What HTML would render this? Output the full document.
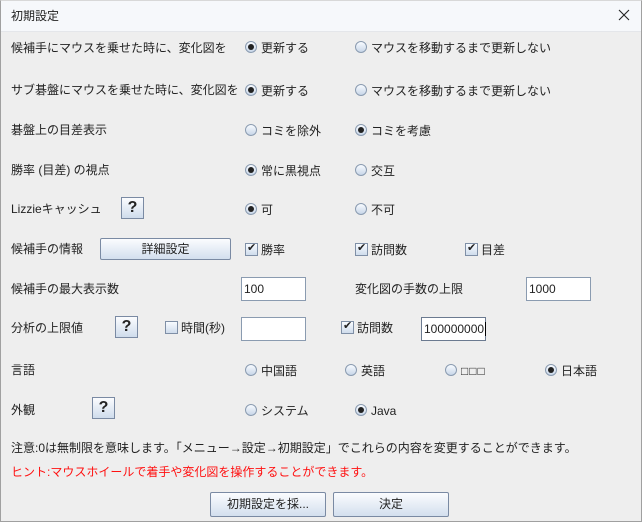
<!DOCTYPE html>
<html><head><meta charset="utf-8"><style>
*{margin:0;padding:0;box-sizing:border-box}
body{width:642px;height:522px;overflow:hidden;background:#eeeeee;font-family:"Liberation Sans","Noto Sans CJK JP",sans-serif;font-size:12px;color:#222;position:relative}
.t{position:absolute;line-height:16px;white-space:nowrap}
.title{position:absolute;left:0;top:0;width:642px;height:32px;background:#f6f8fb;border-bottom:1px solid #e4e6ea}
.r{position:absolute;width:12px;height:12px;border-radius:50%;border:1px solid #8a9bb0;background:linear-gradient(#f8fbff,#c8d6e8)}
.r.on::after{content:"";position:absolute;left:2px;top:2px;width:6px;height:6px;border-radius:50%;background:#222}
.c{position:absolute;width:13px;height:13px;border:1px solid #7f8fa6;background:linear-gradient(#f8fbff,#cfdcec)}
.c.on::after{content:"✔";position:absolute;left:1px;top:-3px;font-size:11px;color:#222}
.b{position:absolute;border:1px solid #7a8aa3;border-radius:2px;background:linear-gradient(#fbfcfe,#d3dfee);text-align:center;line-height:20px}
.q{position:absolute;width:23px;height:22px;border:1px solid #7a8aa3;background:linear-gradient(#fbfcfe,#cfdcec);text-align:center;font-weight:bold;font-size:16px;line-height:20px}
.f{position:absolute;height:24px;border:1px solid #8a9bb0;background:#fff;padding-left:2px;line-height:22px;color:#222}
.edge{position:absolute;left:0;top:0;width:642px;height:522px;border:1px solid #a0a0a0;border-top-color:#d8d8d8;pointer-events:none}
</style></head><body>
<div class="title"></div>
<div class="t" style="left:11px;top:8px">初期設定</div>
<svg style="position:absolute;left:618px;top:9px" width="12" height="12" viewBox="0 0 12 12"><path d="M1 1L11 11M11 1L1 11" stroke="#222" stroke-width="1.1" fill="none"/></svg>

<div class="t" style="left:11px;top:40px">候補手にマウスを乗せた時に、変化図を</div>
<div class="r on" style="left:245px;top:41px"></div><div class="t" style="left:261px;top:40px">更新する</div>
<div class="r" style="left:355px;top:41px"></div><div class="t" style="left:371px;top:40px">マウスを移動するまで更新しない</div>

<div class="t" style="left:11px;top:82px">サブ碁盤にマウスを乗せた時に、変化図を</div>
<div class="r on" style="left:245px;top:84px"></div><div class="t" style="left:261px;top:83px">更新する</div>
<div class="r" style="left:355px;top:84px"></div><div class="t" style="left:371px;top:83px">マウスを移動するまで更新しない</div>

<div class="t" style="left:11px;top:122px">碁盤上の目差表示</div>
<div class="r" style="left:245px;top:124px"></div><div class="t" style="left:261px;top:123px">コミを除外</div>
<div class="r on" style="left:355px;top:124px"></div><div class="t" style="left:371px;top:123px">コミを考慮</div>

<div class="t" style="left:11px;top:162px">勝率 (目差) の視点</div>
<div class="r on" style="left:245px;top:164px"></div><div class="t" style="left:261px;top:163px">常に黒視点</div>
<div class="r" style="left:355px;top:164px"></div><div class="t" style="left:371px;top:163px">交互</div>

<div class="t" style="left:11px;top:201px">Lizzieキャッシュ</div>
<div class="q" style="left:121px;top:197px">?</div>
<div class="r on" style="left:245px;top:203px"></div><div class="t" style="left:261px;top:202px">可</div>
<div class="r" style="left:355px;top:203px"></div><div class="t" style="left:371px;top:202px">不可</div>

<div class="t" style="left:11px;top:241px">候補手の情報</div>
<div class="b" style="left:100px;top:238px;width:131px;height:22px">詳細設定</div>
<div class="c on" style="left:245px;top:243px"></div><div class="t" style="left:261px;top:242px">勝率</div>
<div class="c on" style="left:355px;top:243px"></div><div class="t" style="left:371px;top:242px">訪問数</div>
<div class="c on" style="left:465px;top:243px"></div><div class="t" style="left:481px;top:242px">目差</div>

<div class="t" style="left:11px;top:281px">候補手の最大表示数</div>
<div class="f" style="left:241px;top:277px;width:65px">100</div>
<div class="t" style="left:355px;top:281px">変化図の手数の上限</div>
<div class="f" style="left:526px;top:277px;width:65px">1000</div>

<div class="t" style="left:11px;top:320px">分析の上限値</div>
<div class="q" style="left:115px;top:316px">?</div>
<div class="c" style="left:165px;top:321px"></div><div class="t" style="left:181px;top:320px">時間(秒)</div>
<div class="f" style="left:241px;top:317px;width:65px"></div>
<div class="c on" style="left:341px;top:321px"></div><div class="t" style="left:357px;top:320px">訪問数</div>
<div class="f" style="left:421px;top:317px;width:65px;border-color:#6b7a90">100000000<span style="border-left:1px solid #000;margin-left:1px"></span></div>

<div class="t" style="left:11px;top:362px">言語</div>
<div class="r" style="left:245px;top:364px"></div><div class="t" style="left:261px;top:363px">中国語</div>
<div class="r" style="left:345px;top:364px"></div><div class="t" style="left:361px;top:363px">英語</div>
<div class="r" style="left:445px;top:364px"></div><div class="t" style="left:461px;top:363px;letter-spacing:1px">□□□</div>
<div class="r on" style="left:545px;top:364px"></div><div class="t" style="left:561px;top:363px">日本語</div>

<div class="t" style="left:11px;top:402px">外観</div>
<div class="q" style="left:92px;top:397px">?</div>
<div class="r" style="left:245px;top:404px"></div><div class="t" style="left:261px;top:403px">システム</div>
<div class="r on" style="left:355px;top:404px"></div><div class="t" style="left:371px;top:403px">Java</div>

<div class="t" style="left:11px;top:440px">注意:0は無制限を意味します。「メニュー→設定→初期設定」でこれらの内容を変更することができます。</div>
<div class="t" style="left:11px;top:464px;color:#ff1010">ヒント:マウスホイールで着手や変化図を操作することができます。</div>

<div class="b" style="left:210px;top:492px;width:116px;height:25px;line-height:23px">初期設定を採...</div>
<div class="b" style="left:333px;top:492px;width:116px;height:25px;line-height:23px">決定</div>
<div class="edge"></div>
</body></html>
